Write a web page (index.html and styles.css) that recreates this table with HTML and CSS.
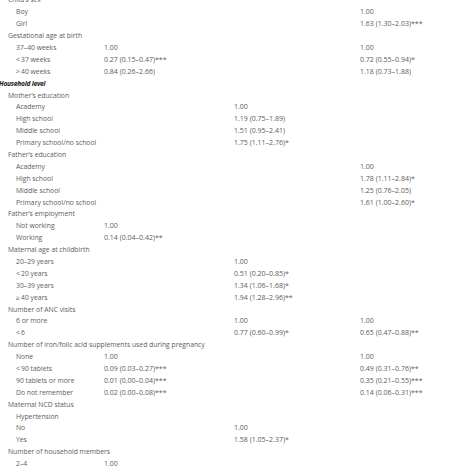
FILE: index.html
```html
<!DOCTYPE html>
<html>
<head>
<meta charset="utf-8">
<link rel="stylesheet" href="styles.css">
</head>
<body>
<div class="table">
  <div class="row"><div class="lbl l1">Child’s sex</div><div></div><div></div><div></div></div>
  <div class="row"><div class="lbl l2">Boy</div><div></div><div></div><div>1.00</div></div>
  <div class="row"><div class="lbl l2">Girl</div><div></div><div></div><div>1.63 (1.30–2.03)***</div></div>
  <div class="row"><div class="lbl l1">Gestational age at birth</div><div></div><div></div><div></div></div>
  <div class="row"><div class="lbl l2">37–40 weeks</div><div>1.00</div><div></div><div>1.00</div></div>
  <div class="row"><div class="lbl l2">&lt;&#8201;37 weeks</div><div>0.27 (0.15–0.47)***</div><div></div><div>0.72 (0.55–0.94)*</div></div>
  <div class="row"><div class="lbl l2">&gt;&#8201;40 weeks</div><div>0.84 (0.26–2.66)</div><div></div><div>1.18 (0.73–1.88)</div></div>
  <div class="row"><div class="lbl section">Household level</div><div></div><div></div><div></div></div>
  <div class="row"><div class="lbl l1">Mother’s education</div><div></div><div></div><div></div></div>
  <div class="row"><div class="lbl l2">Academy</div><div></div><div>1.00</div><div></div></div>
  <div class="row"><div class="lbl l2">High school</div><div></div><div>1.19 (0.75–1.89)</div><div></div></div>
  <div class="row"><div class="lbl l2">Middle school</div><div></div><div>1.51 (0.95–2.41)</div><div></div></div>
  <div class="row"><div class="lbl l2">Primary school/no school</div><div></div><div>1.75 (1.11–2.76)*</div><div></div></div>
  <div class="row"><div class="lbl l1">Father’s education</div><div></div><div></div><div></div></div>
  <div class="row"><div class="lbl l2">Academy</div><div></div><div></div><div>1.00</div></div>
  <div class="row"><div class="lbl l2">High school</div><div></div><div></div><div>1.78 (1.11–2.84)*</div></div>
  <div class="row"><div class="lbl l2">Middle school</div><div></div><div></div><div>1.25 (0.76–2.05)</div></div>
  <div class="row"><div class="lbl l2">Primary school/no school</div><div></div><div></div><div>1.61 (1.00–2.60)*</div></div>
  <div class="row"><div class="lbl l1">Father’s employment</div><div></div><div></div><div></div></div>
  <div class="row"><div class="lbl l2">Not working</div><div>1.00</div><div></div><div></div></div>
  <div class="row"><div class="lbl l2">Working</div><div>0.14 (0.04–0.42)**</div><div></div><div></div></div>
  <div class="row"><div class="lbl l1">Maternal age at childbirth</div><div></div><div></div><div></div></div>
  <div class="row"><div class="lbl l2">20–29 years</div><div></div><div>1.00</div><div></div></div>
  <div class="row"><div class="lbl l2">&lt;&#8201;20 years</div><div></div><div>0.51 (0.20–0.85)*</div><div></div></div>
  <div class="row"><div class="lbl l2">30–39 years</div><div></div><div>1.34 (1.06–1.68)*</div><div></div></div>
  <div class="row"><div class="lbl l2">≥&#8201;40 years</div><div></div><div>1.94 (1.28–2.96)**</div><div></div></div>
  <div class="row"><div class="lbl l1">Number of ANC visits</div><div></div><div></div><div></div></div>
  <div class="row"><div class="lbl l2">6 or more</div><div></div><div>1.00</div><div>1.00</div></div>
  <div class="row"><div class="lbl l2">&lt;&#8201;6</div><div></div><div>0.77 (0.60–0.99)*</div><div>0.65 (0.47–0.88)**</div></div>
  <div class="row"><div class="lbl l1">Number of iron/folic acid supplements used during pregnancy</div><div></div><div></div><div></div></div>
  <div class="row"><div class="lbl l2">None</div><div>1.00</div><div></div><div>1.00</div></div>
  <div class="row"><div class="lbl l2">&lt;&#8201;90 tablets</div><div>0.09 (0.03–0.27)***</div><div></div><div>0.49 (0.31–0.76)**</div></div>
  <div class="row"><div class="lbl l2">90 tablets or more</div><div>0.01 (0.00–0.04)***</div><div></div><div>0.35 (0.21–0.55)***</div></div>
  <div class="row"><div class="lbl l2">Do not remember</div><div>0.02 (0.00–0.08)***</div><div></div><div>0.14 (0.06–0.31)***</div></div>
  <div class="row"><div class="lbl l1">Maternal NCD status</div><div></div><div></div><div></div></div>
  <div class="row"><div class="lbl l2">Hypertension</div><div></div><div></div><div></div></div>
  <div class="row"><div class="lbl l2">No</div><div></div><div>1.00</div><div></div></div>
  <div class="row"><div class="lbl l2">Yes</div><div></div><div>1.58 (1.05–2.37)*</div><div></div></div>
  <div class="row"><div class="lbl l1">Number of household members</div><div></div><div></div><div></div></div>
  <div class="row"><div class="lbl l2">2–4</div><div>1.00</div><div></div><div></div></div>
</div>
</body>
</html>
```
FILE: styles.css
```css
html, body {
  margin: 0;
  padding: 0;
  background: #ffffff;
}
.table {
  margin-top: -5.6px;
  font-family: "Open Sans", "Noto Sans", sans-serif;
  font-size: 7px;
  color: #5c5c5c;
}
.row {
  display: grid;
  grid-template-columns: 104px 130px 126px 1fr;
  height: 11.9px;
  line-height: 11.9px;
  white-space: nowrap;
}
.lbl {
  font-size: 6.8px;
}
.lbl.l1 { padding-left: 8px; }
.lbl.l2 { padding-left: 16px; }
.lbl.section {
  padding-left: 0;
  margin-left: -1px;
  font-size: 6.6px;
  letter-spacing: -0.2px;
  font-weight: bold;
  font-style: italic;
  color: #1a1a1a;
}
```
